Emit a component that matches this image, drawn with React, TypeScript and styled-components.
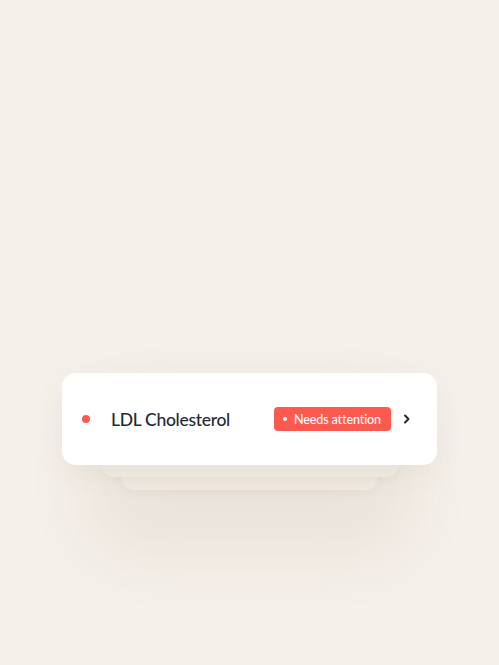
import React from "react";
import styled, { createGlobalStyle } from "styled-components";

const Global = createGlobalStyle`
  html, body { margin: 0; padding: 0; background: #f5f0ea; }
  body { font-family: Lato, "Noto Sans", sans-serif; }
`;

const Page = styled.div`
  width: 499px;
  height: 665px;
  box-sizing: border-box;
  padding: 373px 0 0 62px;
  background: #f5f0ea;
  overflow: hidden;
`;

const Stack = styled.div`
  position: relative;
  width: 375px;
  &::before, &::after {
    content: "";
    position: absolute;
    border-radius: 12px;
  }
  &::before {
    left: 40px;
    right: 39px;
    top: 20px;
    bottom: -12px;
    background: #f1ebe4;
    box-shadow: 0 3px 8px rgba(120, 90, 60, 0.04);
    z-index: 1;
  }
  &::after {
    left: 60px;
    right: 59px;
    top: 30px;
    bottom: -25px;
    background: #efe9e2;
    box-shadow: 0 30px 70px 30px rgba(110, 80, 50, 0.08), 0 4px 10px rgba(120, 90, 60, 0.04);
    z-index: 0;
  }
`;

const Card = styled.div`
  position: relative;
  z-index: 2;
  height: 92px;
  box-sizing: border-box;
  background: #ffffff;
  border-radius: 14px;
  display: flex;
  align-items: center;
  padding: 0 26px 0 20px;
  box-shadow: 0 8px 30px rgba(110, 80, 50, 0.06);
`;

const Dot = styled.span<{ $size: number; $color: string }>`
  width: ${(p) => p.$size}px;
  height: ${(p) => p.$size}px;
  border-radius: 50%;
  background: ${(p) => p.$color};
  flex-shrink: 0;
`;

const Title = styled.span`
  margin-left: 21px;
  font-size: 17.5px;
  font-weight: 500;
  letter-spacing: -0.3px;
  color: #1f2a33;
  flex: 1;
`;

const Badge = styled.span`
  display: flex;
  align-items: center;
  gap: 7px;
  height: 24px;
  box-sizing: border-box;
  padding: 0 10px 0 9px;
  border-radius: 4px;
  background: #fd5a4f;
  color: #ffffff;
  font-size: 12.5px;
  font-weight: 500;
  letter-spacing: -0.1px;
`;

const Chevron = styled.svg`
  margin-left: 12px;
  width: 8px;
  height: 10px;
`;

export default function App() {
  return (
    <>
      <Global />
      <Page>
        <Stack>
          <Card>
            <Dot $size={8} $color="#fd5a4f" />
            <Title>LDL Cholesterol</Title>
            <Badge>
              <Dot $size={4} $color="#ffffff" />
              Needs attention
            </Badge>
            <Chevron viewBox="0 0 8 10">
              <path d="M2 1.5 L5.5 5 L2 8.5" fill="none" stroke="#1f2a33" strokeWidth="2" strokeLinecap="round" strokeLinejoin="round" />
            </Chevron>
          </Card>
        </Stack>
      </Page>
    </>
  );
}
